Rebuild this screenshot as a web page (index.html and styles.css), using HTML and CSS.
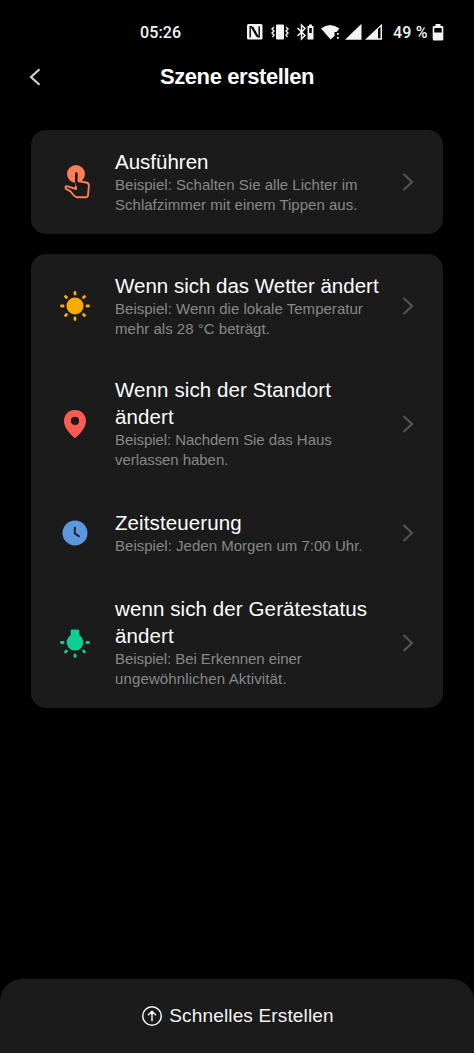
FILE: index.html
```html
<!DOCTYPE html>
<html lang="de">
<head>
<meta charset="utf-8">
<meta name="viewport" content="width=device-width, initial-scale=1">
<title>Szene erstellen</title>
<link rel="stylesheet" href="styles.css">
</head>
<body>
<div class="screen">
  <div class="status">
    <span class="time">05:26</span>
    <svg class="status-icons" width="140" height="20" viewBox="0 0 140 20" fill="#f4f4f4">
      <rect x="1" y="2" width="15.500" height="15.500" rx="1.500"/>
      <path d="M4.200 15.500V4.800H5.500L11 14.500M6.500 4.800L12 14.800H13.200V4.200" fill="none" stroke="#000" stroke-width="1.400"/>
      <rect x="30" y="2.500" width="8" height="15" rx="1"/>
      <path d="M28 5l-2 2 2 2-2 2 2 2-1.500 2M40 5l2 2-2 2 2 2-2 2 1.500 2" fill="none" stroke="#f4f4f4" stroke-width="1.400"/>
      <path d="M51.500 6l7.500 7.500-3.500 3.500V3L59 6.500l-7.500 7.500" fill="none" stroke="#f4f4f4" stroke-width="1.500"/>
      <path d="M63 2.500h3v1.500h1.500v13.500h-6V4H63z"/><path d="M63.200 6h2.600v5h-2.600z" fill="#000"/>
      <path d="M75 6.500Q84 -.5 93.500 6.500L90.500 10h-2v4L84.500 17.500z"/>
      <path d="M91 11h1.800v1.800H91zM91 15h1.800v1.800H91z"/>
      <path d="M99 17.700L115.500 1.700v16z"/>
      <path fill-rule="evenodd" d="M119 17.700L136 1.700v16zM132 7l2.500-2.200v11.500h-2.500z"/>
    </svg>
    <span class="percent">49 %</span>
    <svg width="12" height="17" viewBox="0 0 12 17"><path fill="#f4f4f4" d="M3.500 0h5v2H10a1.300 1.300 0 0 1 1.300 1.300v12A1.300 1.300 0 0 1 10 16.600H2A1.300 1.300 0 0 1 .7 15.300v-12A1.300 1.300 0 0 1 2 2h1.500z"/><path fill="#000" d="M2.300 4h7.400v4.500H2.300z"/></svg>
  </div>

  <header class="header">
    <svg class="back" width="14" height="18" viewBox="0 0 14 18"><path d="M11.500 1.200L3 9l8.500 7.800"/></svg>
    <h1 class="heading">Szene erstellen</h1>
  </header>

  <main class="content">
    <section class="card">
      <div class="row">
        <svg class="icon" viewBox="0 0 34 36">
          <circle cx="18" cy="10" r="9" fill="#ff7d58"/>
          <path d="M18 10V25L9.500 22.300C7.500 22 6.500 23.800 8.500 25.200L12.500 27.300C14.500 30 16.500 33 19 33.200H28.200C29.200 33.200 29.800 32.500 30 31.500L30.900 21.500C31 19.700 29.800 18.800 28.200 18.500L19.500 17V10Q18.700 9 18 10z" fill="#1b1b1b" stroke="#ff7d58" stroke-width="1.900" stroke-linejoin="round"/>
          <path d="M18.300 9.500V18" stroke="#1b1b1b" stroke-width="2.600" stroke-linecap="round"/>
          <path d="M18.300 17V22" stroke="#1b1b1b" stroke-width="1.500"/>
        </svg>
        <div class="text"><h2 class="title">Ausführen</h2><p class="sub">Beispiel: Schalten Sie alle Lichter im<br>Schlafzimmer mit einem Tippen aus.</p></div>
        <svg class="chevron" viewBox="0 0 12 20"><path d="M1.500 2l8.500 8-8.500 8"/></svg>
      </div>
    </section>

    <section class="card">
      <div class="row">
        <svg class="icon" viewBox="0 0 34 36">
          <circle cx="17" cy="18" r="8.500" fill="#ffab00"/>
          <path d="M17 4.500v1.600M17 29.900v1.600M3.500 18h1.600M28.900 18h1.600M7.500 8.500l1 1M25.500 26.500l1 1M26.500 8.500l-1 1M8.500 26.500l-1 1" stroke="#ffab00" stroke-width="2.800" stroke-linecap="round"/>
        </svg>
        <div class="text"><h2 class="title">Wenn sich das Wetter ändert</h2><p class="sub">Beispiel: Wenn die lokale Temperatur<br>mehr als 28 °C beträgt.</p></div>
        <svg class="chevron" viewBox="0 0 12 20"><path d="M1.500 2l8.500 8-8.500 8"/></svg>
      </div>
      <div class="row">
        <svg class="icon" viewBox="0 0 34 36">
          <path fill="#ff5b52" fill-rule="evenodd" d="M17 4C10.500 4 6 8.800 6 15c0 6.500 5 11.500 9.700 16.300q1.300 1.200 2.600 0C23 26.500 28 21.500 28 15c0-6.200-4.500-11-11-11zm0 6.800a4.100 4.100 0 1 1 0 8.200 4.100 4.100 0 0 1 0-8.200z"/>
        </svg>
        <div class="text"><h2 class="title title-wide">Wenn sich der Standort<br>ändert</h2><p class="sub sub-tight">Beispiel: Nachdem Sie das Haus<br>verlassen haben.</p></div>
        <svg class="chevron" viewBox="0 0 12 20"><path d="M1.500 2l8.500 8-8.500 8"/></svg>
      </div>
      <div class="row row-short">
        <svg class="icon" viewBox="0 0 34 36">
          <circle cx="17" cy="18" r="12.500" fill="#5c98e0"/>
          <path d="M16.800 12.800v5.700l4.200 2.700" fill="none" stroke="#1b1b1b" stroke-width="1.900" stroke-linecap="round"/>
        </svg>
        <div class="text"><h2 class="title title-wide">Zeitsteuerung</h2><p class="sub">Beispiel: Jeden Morgen um 7:00 Uhr.</p></div>
        <svg class="chevron" viewBox="0 0 12 20"><path d="M1.500 2l8.500 8-8.500 8"/></svg>
      </div>
      <div class="row">
        <svg class="icon" viewBox="0 0 34 36">
          <path fill="#0bcf94" d="M14 4.500h6q1.300 0 1.300 1.300V10a8.400 8.400 0 1 1-8.600 0V5.800q0-1.300 1.300-1.300z"/>
          <path d="M3.500 17.500h1.600M28.900 17.500h1.600M17 30v1.500M8.500 26l-1 1M25.500 26l1 1" stroke="#0bcf94" stroke-width="2.800" stroke-linecap="round"/>
        </svg>
        <div class="text"><h2 class="title title-wide">wenn sich der Gerätestatus<br>ändert</h2><p class="sub"><span class="sub-tight">Beispiel: Bei Erkennen einer</span><br><span class="sub-wide">ungewöhnlichen Aktivität.</span></p></div>
        <svg class="chevron" viewBox="0 0 12 20"><path d="M1.500 2l8.500 8-8.500 8"/></svg>
      </div>
    </section>
  </main>

  <footer class="footer">
    <svg width="22" height="22" viewBox="0 0 22 22" fill="none" stroke="#f4f4f4" stroke-width="1.500" stroke-linecap="round" stroke-linejoin="round"><circle cx="11" cy="11" r="9.300"/><path d="M11 15.800V6.500M7.500 9.800L11 6.300l3.500 3.500"/></svg>
    <span class="footer-label">Schnelles Erstellen</span>
  </footer>
</div>
</body>
</html>
```
FILE: styles.css
```css
* { box-sizing: border-box; margin: 0; padding: 0; }
body { background: #000; font-family: "Liberation Sans", Arial, sans-serif; color: #fff; }
svg { display: block; flex: none; }
.screen { height: 1053px; display: flex; flex-direction: column; background: #000; }
.status { height: 54px; padding: 10px 30px 0 140px; display: flex; align-items: center; font-family: Roboto, sans-serif; font-size: 16px; font-weight: 500; color: #f4f4f4; }
.time { width: 106px; letter-spacing: 0.1px; }
.percent { width: 39px; margin-left: 7px; white-space: nowrap; letter-spacing: 0.2px; }
.header { height: 46px; display: grid; grid-template-columns: 30px 1fr 30px; align-items: center; padding: 0 28px; }
.back path { fill: none; stroke: #d0d0d0; stroke-width: 2.2; }
.heading { font-size: 22px; line-height: 28px; font-weight: 700; letter-spacing: -0.4px; text-align: center; white-space: nowrap; }
.content { flex: 1; padding: 30px 31px 0; display: flex; flex-direction: column; gap: 20px; }
.card { background: #1b1b1b; border-radius: 15px; }
.row { padding: 18.5px 29px 18.5px 27px; display: flex; align-items: center; }
.row-short { min-height: 88px; }
.icon { width: 34px; height: 36px; }
.text { flex: 1; margin-left: 23px; white-space: nowrap; }
.title { margin-top: -1px; font-size: 20.5px; line-height: 27px; font-weight: 400; letter-spacing: 0; }
.title-wide { letter-spacing: 0.1px; }
.sub { font-size: 15px; line-height: 20px; color: #888; letter-spacing: 0.02px; margin-bottom: 1px; }
.sub-tight { letter-spacing: -0.06px; }
.sub-wide { letter-spacing: 0.13px; }
.chevron { width: 12px; height: 20px; }
.chevron path { fill: none; stroke: #555; stroke-width: 2.1; }
.footer { height: 74px; background: #1b1b1b; border-radius: 22px 22px 0 0; display: flex; justify-content: center; align-items: center; gap: 6px; padding-left: 1px; color: #f4f4f4; }
.footer-label { font-size: 19px; letter-spacing: 0.15px; }
```
